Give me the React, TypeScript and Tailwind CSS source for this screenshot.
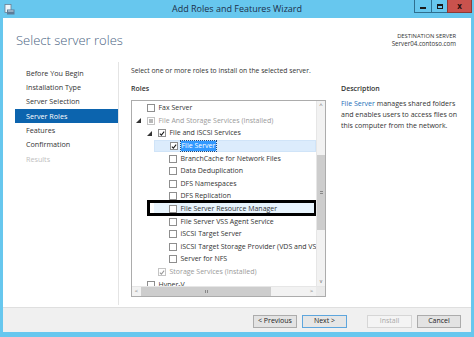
import React from "react";

type Row = {
  level: number;
  text: string;
  exp?: boolean;
  cb?: "none" | "checked" | "ind";
  gray?: boolean;
  selected?: boolean;
  hover?: boolean;
};

const rows: Row[] = [
  { level: 0, text: "Fax Server" },
  { level: 0, exp: true, cb: "ind", gray: true, text: "File And Storage Services (Installed)" },
  { level: 1, exp: true, cb: "checked", text: "File and iSCSI Services" },
  { level: 2, cb: "checked", text: "File Server", selected: true },
  { level: 2, text: "BranchCache for Network Files" },
  { level: 2, text: "Data Deduplication" },
  { level: 2, text: "DFS Namespaces" },
  { level: 2, text: "DFS Replication" },
  { level: 2, text: "File Server Resource Manager", hover: true },
  { level: 2, text: "File Server VSS Agent Service" },
  { level: 2, text: "iSCSI Target Server" },
  { level: 2, text: "iSCSI Target Storage Provider (VDS and VSS hardware providers)" },
  { level: 2, text: "Server for NFS" },
  { level: 1, cb: "checked", gray: true, text: "Storage Services (Installed)" },
  { level: 0, text: "Hyper-V" },
];

function Check({ kind, gray }: { kind?: string; gray?: boolean }) {
  const border = gray ? "border-[#c4c4c4]" : "border-[#8e8e8e]";
  return (
    <div className={`w-[8px] h-[8px] shrink-0 border ${border} bg-white flex items-center justify-center`}>
      {kind === "checked" && (
        <svg width="7" height="7" viewBox="0 0 7 7">
          <path d="M1 3.6 L2.8 5.4 L6 1.3" fill="none" stroke={gray ? "#9a9a9a" : "#1a1a1a"} strokeWidth="1.2" />
        </svg>
      )}
      {kind === "ind" && <div className="w-[4px] h-[4px] bg-[#b8b8b8]" />}
    </div>
  );
}

function Expander() {
  return (
    <svg width="5" height="5" viewBox="0 0 5 5" className="ml-[4px]">
      <path d="M5 0 L5 5 L0 5 Z" fill="#333" />
    </svg>
  );
}

function ListRow({ r }: { r: Row }) {
  const ml = 11 * r.level;
  return (
    <div className="h-[12.6px] flex items-stretch" style={{ paddingLeft: ml }}>
      <div
        className={`flex-1 flex items-center min-w-0 ${
          r.selected ? "bg-[#dcecfc] border border-[#d0e4f8]" : r.hover ? "bg-[#e8f4fd]" : ""
        }`}
      >
        <div className="w-[15px] shrink-0 flex items-center">{r.exp && <Expander />}</div>
        <Check kind={r.cb} gray={r.gray} />
        <span
          className={`ml-[2.5px] px-[1px] whitespace-nowrap leading-[10px] ${
            r.selected
              ? "bg-[#3399ff] text-white outline outline-1 outline-dotted outline-[#1a4a80]"
              : r.gray
              ? "text-[#9a9a9a]"
              : "text-[#333]"
          }`}
        >
          {r.text}
        </span>
      </div>
    </div>
  );
}

function Btn({ children, primary, disabled }: { children: React.ReactNode; primary?: boolean; disabled?: boolean }) {
  return (
    <div
      className={`h-[13px] flex items-center justify-center text-[7px] border ${
        primary
          ? "border-[#5ea6dd] bg-[#e6e6e6] text-[#222]"
          : disabled
          ? "border-[#d6d6d6] bg-[#f4f4f4] text-[#a8a8a8]"
          : "border-[#acacac] bg-[#e3e3e3] text-[#222]"
      }`}
    >
      {children}
    </div>
  );
}

export default function App() {
  const nav = [
    "Before You Begin",
    "Installation Type",
    "Server Selection",
    "Server Roles",
    "Features",
    "Confirmation",
    "Results",
  ];
  return (
    <div className="w-[474px] h-[337px] bg-[#67c7ee] flex flex-col overflow-hidden font-['Open_Sans',sans-serif]">
      {/* Title bar */}
      <div className="h-[18px] relative flex items-center shrink-0">
        <svg width="11" height="11" viewBox="0 0 11 11" className="absolute left-[4px] top-[4px]">
          <rect x="1" y="0.5" width="6" height="8" fill="#eef6fb" stroke="#6a7f92" strokeWidth="0.8" />
          <rect x="3" y="5.5" width="7.5" height="5" fill="#5d7d99" />
          <rect x="4" y="6.5" width="5.5" height="1" fill="#cfe2ef" />
        </svg>
        <div className="absolute inset-x-0 top-[3px] text-center text-[9px] leading-[12px] text-[#1c2f4a]">
          Add Roles and Features Wizard
        </div>
        <div className="absolute right-[2px] top-0 flex h-[13px]">
          <div className="w-[18px] border border-[#2f6f8f] border-t-0 bg-[#67c7ee] flex items-end justify-center pb-[3px]">
            <div className="w-[6px] h-[2px] bg-[#1a1a1a]" />
          </div>
          <div className="w-[15px] border-b border-[#2f6f8f] bg-[#67c7ee] flex items-center justify-center">
            <div className="w-[6px] h-[5px] border border-[#1a1a1a] border-t-2" />
          </div>
          <div className="w-[25px] bg-[#c9524d] border border-t-0 border-[#8c3a36] flex items-center justify-center text-[8px] font-bold text-[#2a0f0e] leading-none">
            x
          </div>
        </div>
      </div>

      {/* Body */}
      <div className="flex-1 mx-[3px] bg-white flex flex-col min-h-0">
        {/* Header */}
        <div className="h-[40px] shrink-0 flex justify-between">
          <div className="pl-[13px] pt-[13px] text-[13px] leading-[18px] font-light text-[#4a6382]">
            Select server roles
          </div>
          <div className="pr-[15px] pt-[14px] text-right text-[#333]">
            <div className="text-[5.8px] leading-[8px]">DESTINATION SERVER</div>
            <div className="text-[6.2px] leading-[8px]">Server04.contoso.com</div>
          </div>
        </div>

        {/* Main */}
        <div className="flex-1 flex min-h-0">
          <div className="w-[103px] ml-[12px] pt-[8px] flex flex-col">
            {nav.map((n) => (
              <div
                key={n}
                className={`h-[14.3px] flex items-center pl-[11px] text-[7.2px] whitespace-nowrap ${
                  n === "Server Roles"
                    ? "bg-[#0c64ae] text-white"
                    : n === "Results"
                    ? "text-[#c0c0c0]"
                    : "text-[#333]"
                }`}
              >
                {n}
              </div>
            ))}
          </div>
          <div className="w-px bg-[#e4e4e4] mt-[4px] mb-[2px]" />
          <div className="flex-1 pl-[12px] pt-[7px] flex flex-col text-[7px] text-[#333]">
            <div className="h-[12px] leading-[12px] whitespace-nowrap text-[6.8px]">
              Select one or more roles to install on the selected server.
            </div>
            <div className="flex gap-[15px] mt-[6px]">
              <div className="w-[195px] flex flex-col">
                <div className="h-[17px] leading-[12px] font-semibold text-[#333]">Roles</div>
                <div className="h-[197px] border border-[#acacac] flex flex-col">
                  <div className="flex-1 flex min-h-0">
                    <div className="flex-1 relative overflow-hidden pt-[1px] min-w-0">
                      {rows.map((r, i) => (
                        <ListRow key={i} r={r} />
                      ))}
                      <div className="absolute left-[15px] top-[99px] w-[170px] h-[16px] border-[3px] border-black" />
                    </div>
                    <div className="w-[9px] bg-[#f2f2f2] border-l border-[#e6e6e6] flex flex-col">
                      <div className="h-[9px] flex items-center justify-center text-[6px] text-[#666]">^</div>
                      <div className="h-[45px]" />
                      <div className="h-[75px] bg-[#cdcdcd] flex items-center justify-center">
                        <div className="w-[3px] h-[3px] border-y border-[#888]" />
                      </div>
                      <div className="flex-1" />
                      <div className="h-[9px] flex items-center justify-center text-[5px] text-[#666]">v</div>
                    </div>
                  </div>
                  <div className="h-[10px] flex border-t border-[#e6e6e6]">
                    <div className="flex-1 bg-[#f2f2f2] flex">
                      <div className="w-[9px] flex items-center justify-center text-[6px] text-[#666]">&lt;</div>
                      <div className="w-[130px] bg-[#cdcdcd] flex items-center justify-center">
                        <div className="w-[3px] h-[3px] border-x border-[#888]" />
                      </div>
                      <div className="flex-1" />
                      <div className="w-[9px] flex items-center justify-center text-[6px] text-[#666]">&gt;</div>
                    </div>
                    <div className="w-[9px] bg-[#eaeaea]" />
                  </div>
                </div>
              </div>
              <div className="flex-1 flex flex-col">
                <div className="h-[17px] leading-[12px] font-semibold text-[#333]">Description</div>
                <div className="leading-[11px] -mt-[2px] w-[125px]">
                  <span className="text-[#1b6fb8]">File Server</span> manages shared folders and enables users to
                  access files on this computer from the network.
                </div>
              </div>
            </div>
          </div>
        </div>
      </div>

      {/* Footer */}
      <div className="h-[25px] shrink-0 mx-[3px] bg-[#f0f0f0] border-t border-[#dfdfdf] flex items-center justify-end pr-[10px] pt-[2px]">
        <div className="w-[44px]"><Btn>&lt; Previous</Btn></div>
        <div className="w-[45px] ml-[5px]"><Btn primary>Next &gt;</Btn></div>
        <div className="w-[45px] ml-[20px]"><Btn disabled>Install</Btn></div>
        <div className="w-[44px] ml-[5px]"><Btn>Cancel</Btn></div>
      </div>
      <div className="h-[5px] shrink-0" />
    </div>
  );
}
